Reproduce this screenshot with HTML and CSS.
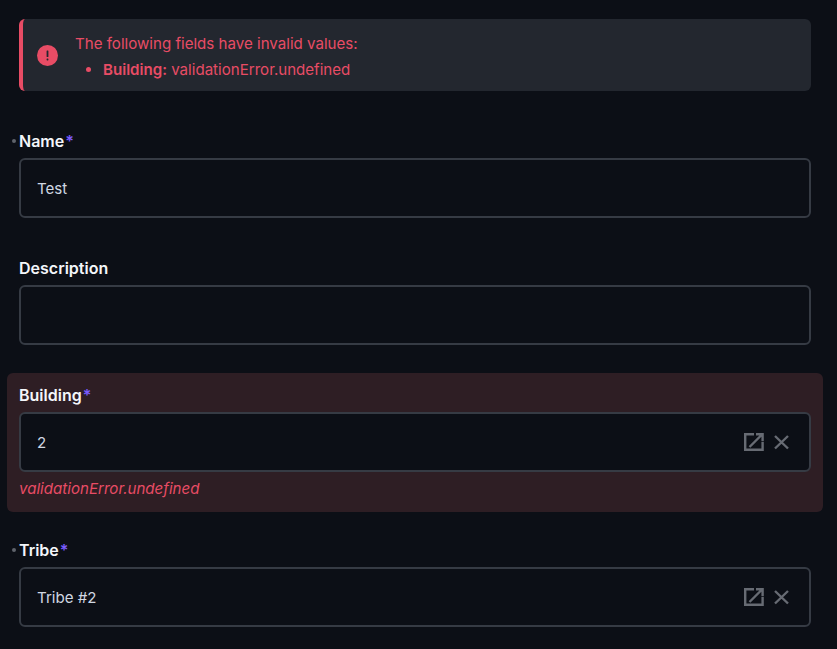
FILE: index.html
```html
<!DOCTYPE html>
<html lang="en">

<head>
    <meta charset="UTF-8">
    <title>Edit entry</title>
    <link rel="stylesheet" href="styles.css">
</head>

<body>
    <div class="alert">
        <svg class="alert-icon" width="21" height="21" viewBox="0 0 21 21">
            <circle cx="10.5" cy="10.5" r="10.5" fill="#e84c65" />
            <rect x="9.6" y="5.5" width="1.8" height="6.5" rx="0.6" fill="#23272f" />
            <rect x="9.6" y="13.5" width="1.8" height="1.9" rx="0.6" fill="#23272f" />
        </svg>
        <div class="alert-text">
            <div class="alert-title">The following fields have invalid values:</div>
            <ul class="alert-list">
                <li><b>Building:</b> validationError.undefined</li>
            </ul>
        </div>
    </div>

    <form class="fields">
        <div class="field">
            <span class="dot"></span>
            <label class="label">Name<span class="req">*</span></label>
            <div class="input">Test</div>
        </div>

        <div class="field">
            <label class="label">Description</label>
            <div class="input"></div>
        </div>

        <div class="field field-error">
            <label class="label">Building<span class="req">*</span></label>
            <div class="input">
                <span class="value">2</span>
                <svg class="icon" width="22" height="22" viewBox="0 0 22 22">
                    <path d="M12 3.200H3.200v15.600h17.400V11M7.500 16 20 3.500M14 3.200h6.600v7" />
                </svg>
                <svg class="icon" width="22" height="22" viewBox="0 0 22 22">
                    <path d="M5 5 18 17.500M18 5 5 17.500" />
                </svg>
            </div>
            <div class="error-text">validationError.undefined</div>
        </div>

        <div class="field">
            <span class="dot"></span>
            <label class="label">Tribe<span class="req">*</span></label>
            <div class="input">
                <span class="value">Tribe #2</span>
                <svg class="icon" width="22" height="22" viewBox="0 0 22 22">
                    <path d="M12 3.200H3.200v15.600h17.400V11M7.500 16 20 3.500M14 3.200h6.600v7" />
                </svg>
                <svg class="icon" width="22" height="22" viewBox="0 0 22 22">
                    <path d="M5 5 18 17.500M18 5 5 17.500" />
                </svg>
            </div>
        </div>
    </form>
</body>

</html>
```

FILE: styles.css
```css
html, body {
    height: 100%;
    overflow: hidden;
}

body {
    margin: 0;
    padding: 19px 14px 0 7px;
    background: #0c0f16;
    color: #d0d7e2;
    font-family: Inter, "Liberation Sans", sans-serif;
    font-size: 15.1px;
}

.alert {
    display: flex;
    align-items: center;
    gap: 17px;
    margin: 0 12px 27px;
    height: 72px;
    box-sizing: border-box;
    padding-left: 14px;
    background: #23272f;
    border-left: 4px solid #e84c65;
    border-radius: 6px;
    color: #e84c65;
}

.alert-icon {
    flex: none;
}

.alert-text {
    line-height: 26px;
    padding-top: 3px;
}

.alert-list {
    margin: 0;
    padding: 0 0 0 28px;
}

.alert-list b {
    font-weight: 600;
}

.fields {
    display: flex;
    flex-direction: column;
    gap: 15px;
}

.field {
    position: relative;
    padding: 12px;
    border-radius: 6px;
}

.field-error {
    margin-top: 1px;
    padding: 11px 12px 13px;
    background: #2e1e24;
}

.dot {
    position: absolute;
    left: 5px;
    top: 21px;
    width: 4px;
    height: 4px;
    border-radius: 50%;
    background: #5f636b;
}

.label {
    display: block;
    height: 22px;
    margin-bottom: 6px;
    line-height: 22px;
    font-size: 16px;
    font-weight: 600;
    color: #f4f6fa;
}

.req {
    color: #7a5cff;
    margin-left: 1px;
}

.input {
    display: flex;
    align-items: center;
    gap: 6px;
    height: 60px;
    box-sizing: border-box;
    padding: 0 17px 0 16px;
    background: #0c0f16;
    border: 2px solid #363b44;
    border-radius: 6px;
}

.value {
    flex: 1;
}

.icon {
    flex: none;
    fill: none;
    stroke: #676b73;
    stroke-width: 2.4;
}

.error-text {
    margin-top: 7px;
    line-height: 20px;
    font-style: italic;
    color: #e84c65;
}
```
